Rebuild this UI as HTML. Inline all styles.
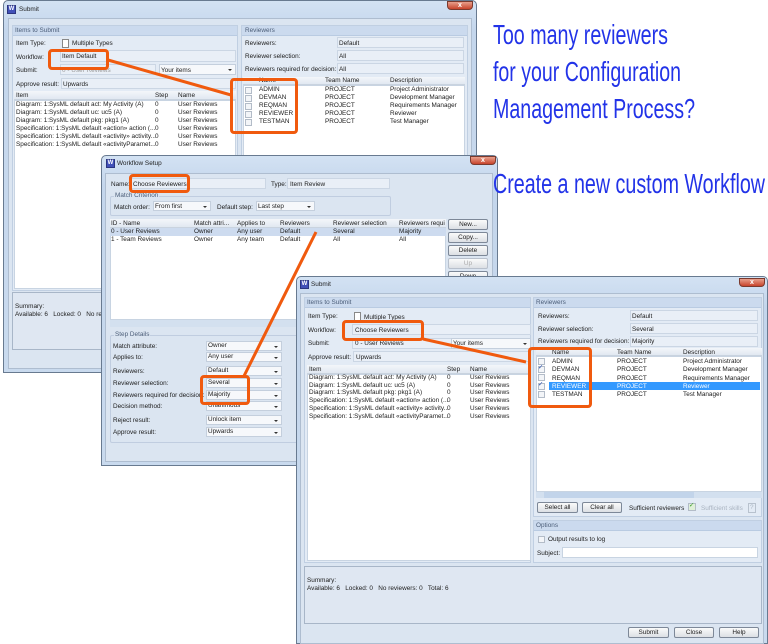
<!DOCTYPE html>
<html><head><meta charset="utf-8"><style>
*{box-sizing:border-box;margin:0;padding:0}
body{width:768px;height:644px;background:#fff;position:relative;overflow:hidden;font-family:"Liberation Sans",sans-serif}
.a{position:absolute}
.t{position:absolute;font:6.4px/8px "Liberation Sans",sans-serif;color:#1c1c1c;white-space:nowrap}
.g{color:#4b5d78}
.win{position:absolute;background:linear-gradient(#d3e2f3,#c4d6ec 30px,#c9daee);border:1px solid #687a90;border-radius:5px 5px 0 0}
.bd{position:absolute;background:#dbe5f1;border:1px solid #aebdd0}
.grp{position:absolute;background:#e3ebf5;border:1px solid #c0cfe2}
.gh{position:absolute;background:#cbdaee;border-bottom:1px solid #b9cbe2}
.fld{position:absolute;background:#e9eff7;border:1px solid #cbd6e4}
.dd{position:absolute;background:#f6f8fb;border:1px solid #c4cfdd}
.dd:after{content:"";position:absolute;right:3px;top:4px;border:2px solid transparent;border-top:2px solid #333}
.wl{position:absolute;background:#fff;border:1px solid #c8d4e2}
.lh{position:absolute;background:linear-gradient(#f3f6fa,#e1e8f1);border-bottom:1px solid #c9d3df}
.btn{position:absolute;background:linear-gradient(#fafafa,#dcdfe4);border:1px solid #7d8898;border-radius:2px;font:6.4px/9px "Liberation Sans",sans-serif;text-align:center;color:#1c1c1c}
.cls{position:absolute;width:26px;height:9px;background:linear-gradient(#e8a08c,#c8442c);border:1px solid #7a3a2e;border-radius:0 0 4px 4px;color:#fff;font:bold 7px/7px "Liberation Sans",sans-serif;text-align:center}
.ic{position:absolute;width:9px;height:9px;background:#4150b8;border:1px solid #2b3580;color:#fff;font:bold 6px/7px "Liberation Sans",sans-serif;text-align:center}
.cb{position:absolute;width:7px;height:7px;border:1px solid #b3bcc8;background:#f3f5f8}
.ob{position:absolute;border:3px solid #f05a0e;border-radius:4px}
.doc{position:absolute;width:7px;height:9px;border:1px solid #888;background:#fff}
.sb{position:absolute;background:#d3e0ef}
</style></head><body>

<!-- ============ DIALOG 1 ============ -->
<div class="win" style="left:3px;top:0;width:474px;height:373px"></div>
<div class="ic" style="left:7px;top:5px">W</div>
<div class="t" style="left:19px;top:6px">Submit</div>
<div class="cls" style="left:447px;top:1px">x</div>
<div class="bd" style="left:8px;top:18px;width:464px;height:351px"></div>
<div class="grp" style="left:12px;top:25px;width:226px;height:266px"></div>
<div class="gh" style="left:13px;top:26px;width:224px;height:10px"></div>
<div class="t g" style="left:15px;top:27px">Items to Submit</div>
<div class="t" style="left:16px;top:40px">Item Type:</div>
<div class="doc" style="left:62px;top:39px"></div>
<div class="t" style="left:72px;top:40px">Multiple Types</div>
<div class="t" style="left:16px;top:54px">Workflow:</div>
<div class="fld" style="left:60px;top:50px;width:176px;height:12px"></div>
<div class="t" style="left:62px;top:53px">Item Default</div>
<div class="t" style="left:16px;top:67px">Submit:</div>
<div class="fld" style="left:60px;top:64px;width:96px;height:11px"></div>
<div class="t" style="left:62px;top:67px;color:#999">0 - User Reviews</div>
<div class="dd" style="left:159px;top:64px;width:77px;height:11px"></div>
<div class="t" style="left:161px;top:67px">Your items</div>
<div class="t" style="left:16px;top:81px">Approve result:</div>
<div class="fld" style="left:61px;top:78px;width:175px;height:11px"></div>
<div class="t" style="left:63px;top:81px">Upwards</div>
<div class="lh" style="left:14px;top:91px;width:222px;height:9px"></div>
<div class="t" style="left:16px;top:92px">Item</div>
<div class="t" style="left:155px;top:92px">Step</div>
<div class="t" style="left:178px;top:92px">Name</div>
<div class="wl" style="left:14px;top:100px;width:222px;height:189px"></div>
<div class="t" style="left:16px;top:101px;line-height:8px">Diagram: 1:SysML default act: My Activity (A)<br>Diagram: 1:SysML default uc: uc5 (A)<br>Diagram: 1:SysML default pkg: pkg1 (A)<br>Specification: 1:SysML default «action» action (...<br>Specification: 1:SysML default «activity» activity...<br>Specification: 1:SysML default «activityParamet...</div>
<div class="t" style="left:155px;top:101px;line-height:8px">0<br>0<br>0<br>0<br>0<br>0</div>
<div class="t" style="left:178px;top:101px;line-height:8px">User Reviews<br>User Reviews<br>User Reviews<br>User Reviews<br>User Reviews<br>User Reviews</div>

<div class="grp" style="left:241px;top:25px;width:227px;height:266px"></div>
<div class="gh" style="left:242px;top:26px;width:225px;height:10px"></div>
<div class="t g" style="left:245px;top:27px">Reviewers</div>
<div class="t" style="left:245px;top:40px">Reviewers:</div>
<div class="fld" style="left:337px;top:37px;width:127px;height:11px"></div>
<div class="t" style="left:339px;top:40px">Default</div>
<div class="t" style="left:245px;top:53px">Reviewer selection:</div>
<div class="fld" style="left:337px;top:50px;width:127px;height:11px"></div>
<div class="t" style="left:339px;top:53px">All</div>
<div class="t" style="left:245px;top:66px">Reviewers required for decision:</div>
<div class="fld" style="left:337px;top:63px;width:127px;height:11px"></div>
<div class="t" style="left:339px;top:66px">All</div>
<div class="lh" style="left:243px;top:77px;width:222px;height:8px"></div>
<div class="t" style="left:259px;top:77px">Name</div>
<div class="t" style="left:325px;top:77px">Team Name</div>
<div class="t" style="left:390px;top:77px">Description</div>
<div class="wl" style="left:243px;top:85px;width:222px;height:204px"></div>
<div class="cb" style="left:245px;top:87px"></div><div class="cb" style="left:245px;top:95px"></div><div class="cb" style="left:245px;top:103px"></div><div class="cb" style="left:245px;top:111px"></div><div class="cb" style="left:245px;top:119px"></div>
<div class="t" style="left:259px;top:86px;line-height:8px">ADMIN<br>DEVMAN<br>REQMAN<br>REVIEWER<br>TESTMAN</div>
<div class="t" style="left:325px;top:86px;line-height:8px">PROJECT<br>PROJECT<br>PROJECT<br>PROJECT<br>PROJECT</div>
<div class="t" style="left:390px;top:86px;line-height:8px">Project Administrator<br>Development Manager<br>Requirements Manager<br>Reviewer<br>Test Manager</div>

<div class="grp" style="left:12px;top:292px;width:458px;height:58px;background:#dfe7f2;border-color:#a8b6c8"></div>
<div class="t" style="left:15px;top:303px">Summary:</div>
<div class="t" style="left:15px;top:311px">Available: 6 &nbsp; Locked: 0 &nbsp; No reviewers: 0 &nbsp;Total: 6</div>

<div class="ob" style="left:48px;top:49px;width:61px;height:21px"></div>
<div class="ob" style="left:230px;top:78px;width:68px;height:56px"></div>
<svg class="a" style="left:0;top:0" width="768" height="644"><line x1="108" y1="60" x2="231" y2="95" stroke="#f05a0e" stroke-width="3"/></svg>

<!-- ============ DIALOG 2 ============ -->
<div class="win" style="left:101px;top:155px;width:397px;height:311px"></div>
<div class="ic" style="left:106px;top:159px">W</div>
<div class="t" style="left:117px;top:160px">Workflow Setup</div>
<div class="cls" style="left:470px;top:156px">x</div>
<div class="bd" style="left:105px;top:173px;width:388px;height:289px"></div>
<div class="t" style="left:111px;top:181px">Name:</div>
<div class="fld" style="left:130px;top:178px;width:136px;height:11px"></div>
<div class="t" style="left:133px;top:181px">Choose Reviewers</div>
<div class="t" style="left:271px;top:181px">Type:</div>
<div class="fld" style="left:287px;top:178px;width:103px;height:11px"></div>
<div class="t" style="left:290px;top:181px">Item Review</div>
<div class="a" style="left:110px;top:196px;width:281px;height:20px;border:1px solid #c0cde0;border-radius:2px"></div>
<div class="t g" style="left:114px;top:192px;background:#dbe5f1;padding:0 1px">Match Criterion</div>
<div class="t" style="left:114px;top:204px">Match order:</div>
<div class="dd" style="left:153px;top:201px;width:58px;height:10px"></div>
<div class="t" style="left:155px;top:203px">From first</div>
<div class="t" style="left:217px;top:204px">Default step:</div>
<div class="dd" style="left:256px;top:201px;width:59px;height:10px"></div>
<div class="t" style="left:258px;top:203px">Last step</div>
<div class="lh" style="left:110px;top:219px;width:336px;height:9px"></div>
<div class="t" style="left:111px;top:220px">ID - Name</div>
<div class="t" style="left:194px;top:220px">Match attri...</div>
<div class="t" style="left:237px;top:220px">Applies to</div>
<div class="t" style="left:280px;top:220px">Reviewers</div>
<div class="t" style="left:333px;top:220px">Reviewer selection</div>
<div class="t" style="left:399px;top:220px">Reviewers requi</div>
<div class="wl" style="left:110px;top:228px;width:336px;height:92px"></div>
<div class="a" style="left:110px;top:228px;width:336px;height:8px;background:#cddbef"></div>
<div class="t" style="left:111px;top:228px;line-height:8px">0 - User Reviews<br>1 - Team Reviews</div>
<div class="t" style="left:194px;top:228px;line-height:8px">Owner<br>Owner</div>
<div class="t" style="left:237px;top:228px;line-height:8px">Any user<br>Any team</div>
<div class="t" style="left:280px;top:228px;line-height:8px">Default<br>Default</div>
<div class="t" style="left:333px;top:228px;line-height:8px">Several<br>All</div>
<div class="t" style="left:399px;top:228px;line-height:8px">Majority<br>All</div>
<div class="sb" style="left:110px;top:320px;width:336px;height:7px"></div>
<div class="btn" style="left:448px;top:219px;width:40px;height:11px">New...</div>
<div class="btn" style="left:448px;top:232px;width:40px;height:11px">Copy...</div>
<div class="btn" style="left:448px;top:245px;width:40px;height:11px">Delete</div>
<div class="btn" style="left:448px;top:258px;width:40px;height:11px;color:#aaa;border-color:#b8c0cc">Up</div>
<div class="btn" style="left:448px;top:271px;width:40px;height:11px">Down</div>
<div class="a" style="left:110px;top:335px;width:284px;height:108px;border:1px solid #c0cde0;border-radius:2px"></div>
<div class="t g" style="left:114px;top:331px;background:#dbe5f1;padding:0 1px">Step Details</div>
<div class="t" style="left:113px;top:343px">Match attribute:</div>
<div class="t" style="left:113px;top:354px">Applies to:</div>
<div class="t" style="left:113px;top:368px">Reviewers:</div>
<div class="t" style="left:113px;top:380px">Reviewer selection:</div>
<div class="t" style="left:113px;top:392px">Reviewers required for decision:</div>
<div class="t" style="left:113px;top:403px">Decision method:</div>
<div class="t" style="left:113px;top:417px">Reject result:</div>
<div class="t" style="left:113px;top:429px">Approve result:</div>
<div class="dd" style="left:206px;top:341px;width:76px;height:10px"></div><div class="t" style="left:208px;top:342px">Owner</div>
<div class="dd" style="left:206px;top:352px;width:76px;height:10px"></div><div class="t" style="left:208px;top:353px">Any user</div>
<div class="dd" style="left:206px;top:366px;width:76px;height:10px"></div><div class="t" style="left:208px;top:367px">Default</div>
<div class="dd" style="left:206px;top:378px;width:76px;height:10px"></div><div class="t" style="left:208px;top:379px">Several</div>
<div class="dd" style="left:206px;top:390px;width:76px;height:10px"></div><div class="t" style="left:208px;top:391px">Majority</div>
<div class="dd" style="left:206px;top:401px;width:76px;height:10px"></div><div class="t" style="left:208px;top:402px">Unanimous</div>
<div class="dd" style="left:206px;top:415px;width:76px;height:10px"></div><div class="t" style="left:208px;top:416px">Unlock item</div>
<div class="dd" style="left:206px;top:427px;width:76px;height:10px"></div><div class="t" style="left:208px;top:428px">Upwards</div>

<div class="ob" style="left:129px;top:174px;width:61px;height:19px"></div>
<div class="ob" style="left:200px;top:375px;width:50px;height:30px"></div>
<svg class="a" style="left:0;top:0" width="768" height="644"><line x1="244" y1="376" x2="316" y2="232" stroke="#f05a0e" stroke-width="3"/></svg>

<!-- ============ DIALOG 3 ============ -->
<div class="win" style="left:296px;top:276px;width:472px;height:368px"></div>
<div class="ic" style="left:300px;top:280px">W</div>
<div class="t" style="left:311px;top:281px">Submit</div>
<div class="cls" style="left:739px;top:278px">x</div>
<div class="bd" style="left:300px;top:293px;width:464px;height:351px"></div>
<div class="grp" style="left:304px;top:297px;width:227px;height:266px"></div>
<div class="gh" style="left:305px;top:298px;width:225px;height:10px"></div>
<div class="t g" style="left:307px;top:299px">Items to Submit</div>
<div class="t" style="left:308px;top:313px">Item Type:</div>
<div class="doc" style="left:354px;top:312px"></div>
<div class="t" style="left:364px;top:314px">Multiple Types</div>
<div class="t" style="left:308px;top:327px">Workflow:</div>
<div class="fld" style="left:352px;top:324px;width:179px;height:11px"></div>
<div class="t" style="left:355px;top:327px">Choose Reviewers</div>
<div class="t" style="left:308px;top:340px">Submit:</div>
<div class="fld" style="left:352px;top:338px;width:100px;height:11px"></div>
<div class="t" style="left:355px;top:340px">0 - User Reviews</div>
<div class="dd" style="left:451px;top:338px;width:80px;height:11px"></div>
<div class="t" style="left:453px;top:340px">Your items</div>
<div class="t" style="left:308px;top:354px">Approve result:</div>
<div class="fld" style="left:353px;top:351px;width:178px;height:11px"></div>
<div class="t" style="left:356px;top:354px">Upwards</div>
<div class="lh" style="left:307px;top:365px;width:224px;height:9px"></div>
<div class="t" style="left:309px;top:366px">Item</div>
<div class="t" style="left:447px;top:366px">Step</div>
<div class="t" style="left:470px;top:366px">Name</div>
<div class="wl" style="left:307px;top:374px;width:224px;height:187px"></div>
<div class="t" style="left:309px;top:374px;line-height:7.7px">Diagram: 1:SysML default act: My Activity (A)<br>Diagram: 1:SysML default uc: uc5 (A)<br>Diagram: 1:SysML default pkg: pkg1 (A)<br>Specification: 1:SysML default «action» action (...<br>Specification: 1:SysML default «activity» activity...<br>Specification: 1:SysML default «activityParamet...</div>
<div class="t" style="left:447px;top:374px;line-height:7.7px">0<br>0<br>0<br>0<br>0<br>0</div>
<div class="t" style="left:470px;top:374px;line-height:7.7px">User Reviews<br>User Reviews<br>User Reviews<br>User Reviews<br>User Reviews<br>User Reviews</div>

<div class="grp" style="left:533px;top:297px;width:229px;height:220px"></div>
<div class="gh" style="left:534px;top:298px;width:227px;height:10px"></div>
<div class="t g" style="left:536px;top:299px">Reviewers</div>
<div class="t" style="left:538px;top:313px">Reviewers:</div>
<div class="fld" style="left:630px;top:310px;width:128px;height:11px"></div>
<div class="t" style="left:632px;top:313px">Default</div>
<div class="t" style="left:538px;top:326px">Reviewer selection:</div>
<div class="fld" style="left:630px;top:323px;width:128px;height:11px"></div>
<div class="t" style="left:632px;top:326px">Several</div>
<div class="t" style="left:538px;top:338px">Reviewers required for decision:</div>
<div class="fld" style="left:630px;top:336px;width:128px;height:11px"></div>
<div class="t" style="left:632px;top:338px">Majority</div>
<div class="lh" style="left:536px;top:348px;width:226px;height:8px"></div>
<div class="t" style="left:552px;top:349px">Name</div>
<div class="t" style="left:617px;top:349px">Team Name</div>
<div class="t" style="left:683px;top:349px">Description</div>
<div class="wl" style="left:536px;top:356px;width:226px;height:136px"></div>
<div class="a" style="left:549px;top:382px;width:211px;height:8px;background:#3399ff"></div>
<div class="cb" style="left:538px;top:358px"></div><div class="cb" style="left:538px;top:366px"></div><div class="cb" style="left:538px;top:374px"></div><div class="cb" style="left:538px;top:383px"></div><div class="cb" style="left:538px;top:391px"></div>
<div class="t" style="left:538px;top:364px;color:#2a4fb0">✓</div>
<div class="t" style="left:538px;top:381px;color:#2a4fb0">✓</div>
<div class="t" style="left:552px;top:358px;line-height:8.3px">ADMIN<br>DEVMAN<br>REQMAN<br><span style="color:#fff">REVIEWER</span><br>TESTMAN</div>
<div class="t" style="left:617px;top:358px;line-height:8.3px">PROJECT<br>PROJECT<br>PROJECT<br><span style="color:#fff">PROJECT</span><br>PROJECT</div>
<div class="t" style="left:683px;top:358px;line-height:8.3px">Project Administrator<br>Development Manager<br>Requirements Manager<br><span style="color:#fff">Reviewer</span><br>Test Manager</div>
<div class="sb" style="left:536px;top:492px;width:226px;height:6px"></div>
<div class="a" style="left:544px;top:492px;width:150px;height:6px;background:#c2d4ea"></div>
<div class="btn" style="left:537px;top:502px;width:41px;height:11px">Select all</div>
<div class="btn" style="left:582px;top:502px;width:40px;height:11px">Clear all</div>
<div class="t" style="left:629px;top:505px">Sufficient reviewers</div>
<div class="cb" style="left:688px;top:503px;width:8px;height:8px;background:#dff0d8"></div>
<div class="t" style="left:689px;top:502px;color:#3a9a2a">✓</div>
<div class="t" style="left:701px;top:505px;color:#a9b3c0">Sufficient skills</div>
<div class="t" style="left:748px;top:503px;color:#a9b3c0;border:1px solid #b8c2ce;padding:0 1px">?</div>

<div class="grp" style="left:533px;top:520px;width:229px;height:43px"></div>
<div class="gh" style="left:534px;top:521px;width:227px;height:10px"></div>
<div class="t g" style="left:536px;top:522px">Options</div>
<div class="cb" style="left:538px;top:536px"></div>
<div class="t" style="left:548px;top:536px">Output results to log</div>
<div class="t" style="left:537px;top:550px">Subject:</div>
<div class="wl" style="left:562px;top:547px;width:196px;height:11px"></div>

<div class="grp" style="left:304px;top:566px;width:458px;height:58px;background:#dfe7f2;border-color:#a8b6c8"></div>
<div class="t" style="left:307px;top:577px">Summary:</div>
<div class="t" style="left:307px;top:585px">Available: 6 &nbsp; Locked: 0 &nbsp; No reviewers: 0 &nbsp; Total: 6</div>
<div class="btn" style="left:628px;top:627px;width:41px;height:11px">Submit</div>
<div class="btn" style="left:674px;top:627px;width:40px;height:11px">Close</div>
<div class="btn" style="left:719px;top:627px;width:40px;height:11px">Help</div>

<div class="ob" style="left:342px;top:320px;width:82px;height:21px"></div>
<div class="ob" style="left:528px;top:347px;width:64px;height:61px"></div>
<svg class="a" style="left:0;top:0" width="768" height="644"><line x1="423" y1="339" x2="526" y2="362" stroke="#f05a0e" stroke-width="3"/></svg>

<!-- ============ BLUE TEXT ============ -->
<svg class="a" style="left:0;top:0" width="768" height="644">
<g font-family="Liberation Sans Narrow, Liberation Sans, sans-serif" font-size="28" fill="#2233e8">
<text x="493" y="44" textLength="175" lengthAdjust="spacingAndGlyphs">Too many reviewers</text>
<text x="493" y="81" textLength="188" lengthAdjust="spacingAndGlyphs">for your Configuration</text>
<text x="493" y="118" textLength="202" lengthAdjust="spacingAndGlyphs">Management Process?</text>
<text x="493" y="193" textLength="272" lengthAdjust="spacingAndGlyphs">Create a new custom Workflow</text>
</g></svg>
</body></html>
